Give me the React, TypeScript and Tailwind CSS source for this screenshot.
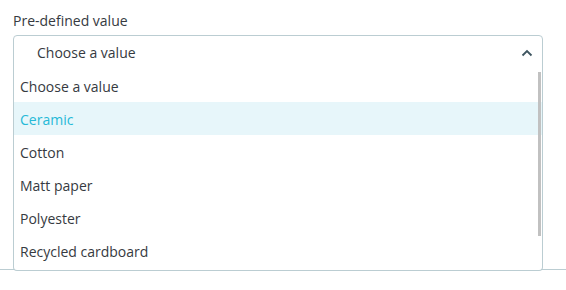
const OPTIONS = ["Choose a value", "Ceramic", "Cotton", "Matt paper", "Polyester", "Recycled cardboard"];

export default function App() {
  const active = "Ceramic";
  return (
    <div className="relative h-[290px] w-[566px] bg-white font-['Open_Sans',sans-serif] text-[14px] text-[#363a41]">
      <div className="h-[270px] border-b border-[#bbcdd2] px-[13px] pt-[11px]">
        <label className="block leading-[20px]">Pre-defined value</label>
        <div className="mt-[4px] flex h-[35px] w-[530px] items-center justify-between rounded-t-[4px] border border-[#bbcdd2] pl-[23px] pr-[9px]">
          <span className="pb-[1px]">Choose a value</span>
          <svg width="12" height="8" viewBox="0 0 12 8" fill="none">
            <path d="M1.5 6.5 L6 2 L10.5 6.5" stroke="#3e5560" strokeWidth="1.8" />
          </svg>
        </div>
      </div>
      {/* open listbox overlays the panel below */}
      <ul className="absolute left-[13px] top-[69px] h-[202px] w-[530px] overflow-hidden rounded-b-[4px] border border-t-0 border-[#bbcdd2] bg-white">
        {OPTIONS.map((opt) => (
          <li
            key={opt}
            className={
              opt === active
                ? "flex h-[33px] items-center bg-[#e7f6fa] pl-[6px] pt-[2px] text-[#25b9d7]"
                : "flex h-[33px] items-center pl-[6px] pt-[2px]"
            }
          >
            {opt}
          </li>
        ))}
        <div className="absolute right-[1px] top-[3px] h-[164px] w-[3px] bg-[#c1c1c1]" />
      </ul>
    </div>
  );
}
